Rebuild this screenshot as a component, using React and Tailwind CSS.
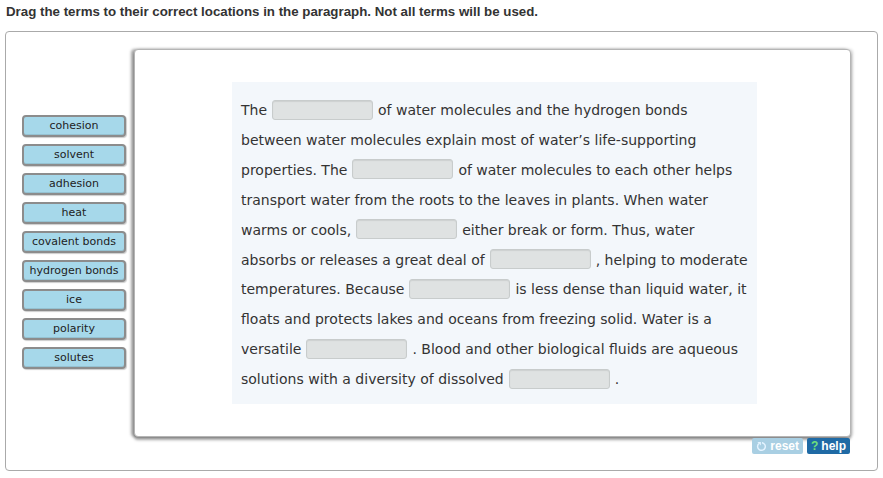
import React from 'react';

const TERMS = ['cohesion', 'solvent', 'adhesion', 'heat', 'covalent bonds', 'hydrogen bonds', 'ice', 'polarity', 'solutes'];

// empty drop target inside the paragraph
function Blank() {
  return (
    <span className="inline-block align-middle w-[101px] h-[20px] mx-[5px] -mt-[3px] rounded-[3px] border border-[#c8cccc] bg-[#dfe2e2] shadow-[inset_0_1px_1px_rgba(0,0,0,0.08)]" />
  );
}

function Term({ label }) {
  return (
    <div className="w-[104px] h-[22px] rounded-[4px] border-2 border-[#8c8c8c] bg-[#a6d8ea] shadow-[inset_0_-1px_0_rgba(0,0,0,0.1),1px_1px_1px_rgba(0,0,0,0.2)] flex items-center justify-center text-[11px] text-[#222] font-['DejaVu_Sans',Verdana,sans-serif]">
      {label}
    </div>
  );
}

export default function App() {
  return (
    <div className="w-[883px] h-[478px] bg-white font-['Liberation_Sans',Arial,sans-serif]">
      <p className="px-[6px] pt-[4px] text-[13.3px] leading-[16px] font-bold text-[#333]">
        Drag the terms to their correct locations in the paragraph. Not all terms will be used.
      </p>

      <div className="mx-[5px] mt-[11px] h-[440px] rounded-[4px] border border-[#aaa] flex">
        {/* term bank */}
        <div className="w-[128px] shrink-0 pl-[16px] pt-[83px] flex flex-col gap-[7px]">
          {TERMS.map(t => <Term key={t} label={t} />)}
        </div>

        <div className="mt-[17px] flex flex-col items-end">
          <div className="w-[717px] h-[388px] rounded-[4px] border border-[#b5b5b5] bg-white shadow-[0_3px_3px_rgba(0,0,0,0.35),-3px_0_3px_rgba(0,0,0,0.35),2px_0_3px_rgba(0,0,0,0.15)] pl-[97px] pt-[32px]">
            <div className="w-[525px] h-[322px] bg-[#f3f7fb] pl-[9px] pt-[14px] text-[14px] leading-[29.9px] text-[#333] font-['DejaVu_Sans',Verdana,sans-serif]">
              The<Blank />of water molecules and the hydrogen bonds<br />
              between water molecules explain most of water’s life-supporting<br />
              properties. The<Blank />of water molecules to each other helps<br />
              transport water from the roots to the leaves in plants. When water<br />
              warms or cools,<Blank />either break or form. Thus, water<br />
              absorbs or releases a great deal of<Blank />, helping to moderate<br />
              temperatures. Because<Blank />is less dense than liquid water, it<br />
              floats and protects lakes and oceans from freezing solid. Water is a<br />
              versatile<Blank />. Blood and other biological fluids are aqueous<br />
              solutions with a diversity of dissolved<Blank />.
            </div>
          </div>

          <div className="flex gap-[4px] mt-[1px] mr-[1px]">
            <div className="h-[16px] px-[4px] flex items-center gap-[3px] rounded-[2px] bg-[#a9cfe3] text-white text-[12px] font-bold leading-none">
              <svg width="11" height="11" viewBox="0 0 12 12" fill="none" stroke="#e4f3ff" strokeWidth="1.6">
                <path d="M3.2 2.8A4.2 4.2 0 1 0 6.5 1.8" />
                <path d="M1.5 1.2h3.8v3.8z" fill="#e4f3ff" stroke="none" />
              </svg>
              reset
            </div>
            <div className="h-[16px] px-[4px] flex items-center gap-[3px] rounded-[2px] bg-[#1f6aa5] text-white text-[12px] font-bold leading-none">
              <span className="text-[#6fe07a]">?</span>help
            </div>
          </div>
        </div>
      </div>
    </div>
  );
}
